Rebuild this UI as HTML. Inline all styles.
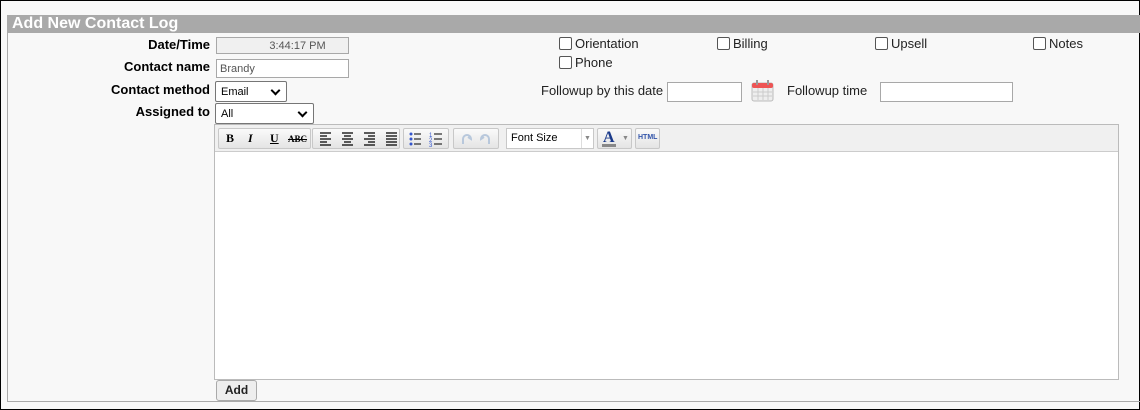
<!DOCTYPE html>
<html><head><style>
*{box-sizing:border-box;margin:0;padding:0}
body{width:1140px;height:410px;background:#f8f8f8;font-family:"Liberation Sans",Arial,sans-serif;position:relative;overflow:hidden}
.a{position:absolute}
.frame{left:0;top:0;width:1140px;height:410px;border:1px solid #000}
.panel{left:7px;top:15px;width:1133px;height:387px;border-left:1px solid #aaa;border-bottom:1px solid #aaa}
.hdr{left:7px;top:15px;width:1133px;height:18px;background:#a9a9a9;color:#fff;font-weight:bold;font-size:16px;line-height:18px;padding-left:5px}
.lbl{font-size:13px;font-weight:bold;color:#000;text-align:right;width:200px;left:10px}
.inp{background:#fff;border:1px solid #a8a8a8;font-size:11px;color:#555;line-height:17px;padding-left:3px}
.sel{background:#fff;border:1px solid #767676;font-size:11px;color:#000;padding-left:5px;line-height:18px;border-radius:2px}
.sel:after{content:"";position:absolute;right:7px;top:5px;width:5px;height:5px;border-right:2px solid #000;border-bottom:2px solid #000;transform:rotate(45deg)}
.cb{font-size:13px;color:#222}
.cb i{display:inline-block;width:13px;height:13px;border:1px solid #555;border-radius:2px;background:#fff;vertical-align:-2px;margin-right:3px}
.t{font-size:13px;color:#222}
.tb{left:214px;top:124px;width:905px;height:256px;border:1px solid #bbb;background:#fff}
.bar{position:absolute;left:0;top:0;width:903px;height:27px;background:#f0f0f0;border-bottom:1px solid #ccc}
.g{position:absolute;top:3px;height:21px;border:1px solid #c8c8c8;background:linear-gradient(#fafafa,#e4e4e4);border-radius:2px}
.g span{position:absolute;top:2px;font-size:12px;font-weight:bold;font-family:"Liberation Serif",serif}
</style></head><body>
<div class="a frame"></div>
<div class="a panel"></div>
<div class="a hdr">Add New Contact Log</div>

<div class="a lbl" style="top:37px">Date/Time</div>
<div class="a inp" style="left:216px;top:37px;width:133px;height:17px;background:#f0f0f0;text-align:center;padding-left:30px">3:44:17 PM</div>
<div class="a lbl" style="top:59px">Contact name</div>
<div class="a inp" style="left:216px;top:59px;width:133px;height:19px;line-height:19px">Brandy</div>
<div class="a lbl" style="top:82px">Contact method</div>
<div class="a sel" style="left:215px;top:81px;width:72px;height:21px;line-height:20px">Email</div>
<div class="a lbl" style="top:104px">Assigned to</div>
<div class="a sel" style="left:215px;top:103px;width:99px;height:21px;line-height:21px">All</div>

<div class="a cb" style="left:559px;top:36px"><i></i>Orientation</div>
<div class="a cb" style="left:717px;top:36px"><i></i>Billing</div>
<div class="a cb" style="left:875px;top:36px"><i></i>Upsell</div>
<div class="a cb" style="left:1033px;top:36px"><i></i>Notes</div>
<div class="a cb" style="left:559px;top:55px"><i></i>Phone</div>

<div class="a t" style="left:541px;top:83px">Followup by this date</div>
<div class="a inp" style="left:667px;top:82px;width:75px;height:20px"></div>
<svg class="a" style="left:751px;top:80px" width="23" height="22" viewBox="0 0 23 22"><rect x="1" y="3" width="21" height="18" rx="2" fill="#eee" stroke="#bbb"/><rect x="1" y="3" width="21" height="5" rx="2" fill="#e55"/><g stroke="#ccc"><line x1="2" y1="12" x2="21" y2="12"/><line x1="2" y1="16" x2="21" y2="16"/><line x1="7" y1="8" x2="7" y2="20"/><line x1="12" y1="8" x2="12" y2="20"/><line x1="17" y1="8" x2="17" y2="20"/></g><rect x="5" y="0" width="2" height="5" fill="#999"/><rect x="16" y="0" width="2" height="5" fill="#999"/></svg>
<div class="a t" style="left:787px;top:83px">Followup time</div>
<div class="a inp" style="left:880px;top:82px;width:133px;height:20px"></div>

<div class="a tb"><div class="bar">
<div class="g" style="left:3px;width:93px"><span style="left:7px">B</span><span style="left:29px;font-style:italic">I</span><span style="left:51px;text-decoration:underline">U</span><span style="left:69px;font-size:9px;top:5px;text-decoration:line-through">ABC</span></div>
<div class="g" style="left:97px;width:88px">
<svg width="86" height="19"><g stroke="#000" stroke-width="1.2"><path d="M7 4h11M7 7h7M7 10h11M7 13h7M7 16h11"/><path d="M29 4h11M31 7h7M29 10h11M31 13h7M29 16h11"/><path d="M51 4h11M55 7h7M51 10h11M55 13h7M51 16h11"/><path d="M73 4h11M73 7h11M73 10h11M73 13h11M73 16h11"/></g></svg></div>
<div class="g" style="left:188px;width:46px"><svg width="44" height="19"><g fill="#35c"><circle cx="7" cy="5" r="1.5"/><circle cx="7" cy="10" r="1.5"/><circle cx="7" cy="15" r="1.5"/><text x="25" y="8" font-size="6" font-family="Liberation Sans">1</text><text x="25" y="13" font-size="6" font-family="Liberation Sans">2</text><text x="25" y="18" font-size="6" font-family="Liberation Sans">3</text></g><g stroke="#000"><path d="M10 5h7M10 10h7M10 15h7M30 5h8M30 10h8M30 15h8"/></g></svg></div>
<div class="g" style="left:238px;width:46px"><svg width="44" height="19"><g stroke="#b8c8dc" stroke-width="2" fill="none"><path d="M9 15v-5a4 4 0 0 1 8 0l-3-2"/><path d="M35 15v-5a4 4 0 0 0-8 0l3-2"/></g></svg></div>
<div class="a" style="left:291px;top:3px;width:88px;height:21px;background:#fff;border:1px solid #c8c8c8;font-size:11px;line-height:19px;padding-left:4px">Font Size<span style="position:absolute;right:0;top:0;width:12px;height:19px;border-left:1px solid #ddd;font-size:7px;color:#888;text-align:center">▼</span></div>
<div class="g" style="left:382px;width:35px"><span style="left:5px;top:0;font-size:16px;color:#1a3a8a;font-family:'Liberation Serif',serif">A</span><div style="position:absolute;left:4px;top:15px;width:14px;height:3px;background:#888"></div><span style="left:24px;top:5px;font-size:7px;color:#888;font-weight:normal">▼</span></div>
<div class="g" style="left:420px;width:25px"><span style="left:2px;top:5px;font-size:7px;color:#35a;font-family:'Liberation Sans',sans-serif">HTML</span></div>
</div></div>

<div class="a" style="left:216px;top:380px;width:41px;height:21px;border:1px solid #aaa;border-radius:3px;background:#eee;font-size:12px;font-weight:bold;text-align:center;line-height:19px;color:#222">Add</div>
</body></html>
